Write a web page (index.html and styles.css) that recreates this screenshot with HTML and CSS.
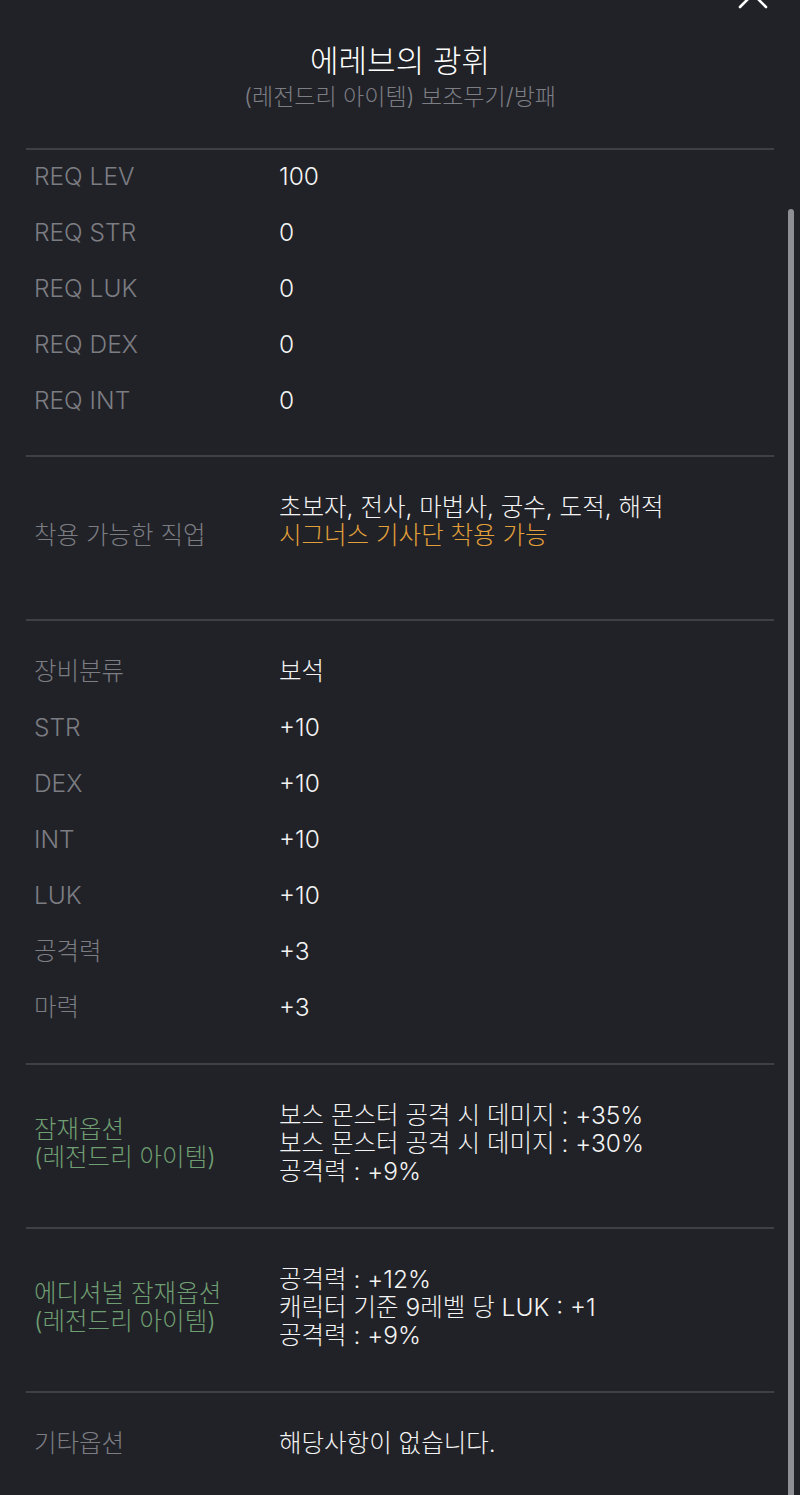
FILE: index.html
```html
<!DOCTYPE html>
<html lang="ko">
<head>
<meta charset="utf-8">
<title>에레브의 광휘</title>
<link rel="stylesheet" href="styles.css">
</head>
<body>
<div class="sheet">
  <button class="close" aria-label="닫기">
    <svg width="36" height="36" viewBox="0 0 36 36"><path d="M5 5 L31 31 M31 5 L5 31" stroke="#ffffff" stroke-width="2.6" stroke-linecap="round" fill="none"/></svg>
  </button>
  <header class="head">
    <h1 class="title">에레브의 광휘</h1>
    <p class="subtitle">(레전드리 아이템) 보조무기/방패</p>
  </header>

  <section class="sec first">
    <div class="row"><div class="k">REQ LEV</div><div class="v">100</div></div>
    <div class="row"><div class="k">REQ STR</div><div class="v">0</div></div>
    <div class="row"><div class="k">REQ LUK</div><div class="v">0</div></div>
    <div class="row"><div class="k">REQ DEX</div><div class="v">0</div></div>
    <div class="row"><div class="k">REQ INT</div><div class="v">0</div></div>
  </section>

  <section class="sec">
    <div class="row"><div class="k">착용 가능한 직업</div><div class="v">초보자, 전사, 마법사, 궁수, 도적, 해적<br><span class="orange">시그너스 기사단 착용 가능</span><br>&nbsp;</div></div>
  </section>

  <section class="sec">
    <div class="row"><div class="k">장비분류</div><div class="v">보석</div></div>
    <div class="row"><div class="k">STR</div><div class="v">+10</div></div>
    <div class="row"><div class="k">DEX</div><div class="v">+10</div></div>
    <div class="row"><div class="k">INT</div><div class="v">+10</div></div>
    <div class="row"><div class="k">LUK</div><div class="v">+10</div></div>
    <div class="row"><div class="k">공격력</div><div class="v">+3</div></div>
    <div class="row"><div class="k">마력</div><div class="v">+3</div></div>
  </section>

  <section class="sec">
    <div class="row"><div class="k green">잠재옵션<br>(레전드리 아이템)</div><div class="v">보스 몬스터 공격 시 데미지 : +35%<br>보스 몬스터 공격 시 데미지 : +30%<br>공격력 : +9%</div></div>
  </section>

  <section class="sec">
    <div class="row"><div class="k green">에디셔널 잠재옵션<br>(레전드리 아이템)</div><div class="v">공격력 : +12%<br>캐릭터 기준 9레벨 당 LUK : +1<br>공격력 : +9%</div></div>
  </section>

  <section class="sec">
    <div class="row"><div class="k">기타옵션</div><div class="v">해당사항이 없습니다.</div></div>
  </section>
  <div class="scrollbar"></div>
</div>
</body>
</html>
```

FILE: styles.css
```css
html, body {
  margin: 0;
  padding: 0;
  background: #212227;
}
body {
  font-family: Inter, "Noto Sans CJK KR", "Noto Sans", sans-serif;
  font-weight: 300;
  color: #f2f2f2;
  -webkit-font-smoothing: antialiased;
}
.sheet {
  position: relative;
  width: 800px;
  min-height: 1495px;
  overflow: hidden;
}
.close {
  position: absolute;
  right: 29px;
  top: -24px;
  background: none;
  border: 0;
  padding: 0;
  width: 36px;
  height: 36px;
}
.head {
  padding-top: 41px;
  padding-bottom: 35px;
  text-align: center;
}
.title {
  margin: 0;
  font-size: 31px;
  font-weight: 300;
  line-height: 40px;
  color: #ffffff;
}
.subtitle {
  margin: 0;
  font-size: 23px;
  line-height: 32px;
  color: #7d7e84;
  font-weight: 300;
}
.sec {
  margin: 0 26px;
  border-top: 2px solid #3f4046;
  padding: 22px 0 28px;
}
.sec.first {
  padding-top: 0;
  padding-bottom: 27px;
}
.sec.first .row:first-child {
  padding-top: 12px;
}
.row {
  display: flex;
  align-items: center;
  padding: 14px 0 14px 8px;
}
.k {
  width: 245px;
  flex: none;
  font-size: 24.5px;
  line-height: 28px;
  color: #7c7d83;
}
.v {
  font-size: 24.5px;
  line-height: 28px;
  color: #f4f4f4;
}
.green {
  color: #6f9e72;
}
.orange {
  color: #e3a03a;
}
.scrollbar {
  position: absolute;
  left: 788px;
  top: 209px;
  width: 6px;
  height: 1300px;
  border-radius: 3px;
  background: #8e8f94;
}
```
